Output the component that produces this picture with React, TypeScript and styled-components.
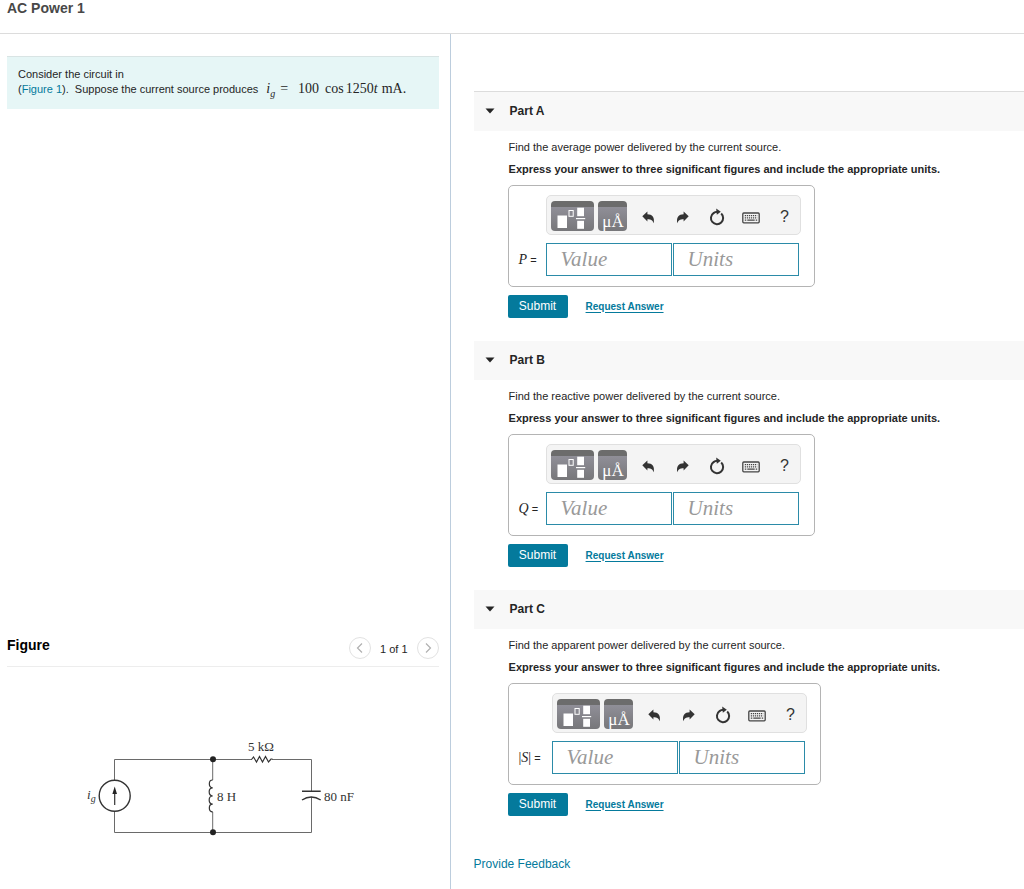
import React from "react";
import styled, { createGlobalStyle } from "styled-components";

const teal = "#047a9c";
const serif = '"Liberation Serif", "Times New Roman", serif';

const GlobalStyle = createGlobalStyle`
  *, *::before, *::after { box-sizing: border-box; }
  body {
    margin: 0;
    background: #fff;
    color: #252525;
    font: 11px/14px "Liberation Sans", Arial, sans-serif;
  }
  button, input { font: inherit; color: inherit; }
  h1, h2, p { margin: 0; }
`;

const Page = styled.div`
  display: flex;
  flex-direction: column;
  min-height: 100vh;
`;

const TitleBar = styled.header`
  height: 34px;
  padding: 0 7px;
  border-bottom: 1px solid #dcdcdc;
`;

const Title = styled.h1`
  color: #484848;
  font-size: 14px;
  line-height: 16px;
`;

const Columns = styled.div`
  flex: 1;
  display: grid;
  grid-template-columns: 44% minmax(0, 1fr);
`;

const LeftColumn = styled.div`
  display: flex;
  flex-direction: column;
  justify-content: space-between;
  padding: 22px 11px 0 7px;
  border-right: 1px solid #bccddd;
`;

const Problem = styled.section`
  padding: 10px 11px 12px;
  border-top: 1px solid #d9e4e4;
  background: #e6f6f6;
`;

const TextLink = styled.a`
  color: ${teal};
  text-decoration: none;
`;

const Formula = styled.span`
  margin-left: 8px;
  font: 14px/16px ${serif};

  sub {
    font-size: 10px;
    line-height: 0;
  }
`;

const Term = styled.span<{ $gap: number }>`
  margin-left: ${(p) => p.$gap}px;
`;

const FigureHeader = styled.div`
  display: flex;
  align-items: flex-start;
  justify-content: space-between;
  height: 32px;
  padding-top: 2px;
  border-bottom: 1px solid #ededed;
`;

const FigureTitle = styled.h2`
  color: #000;
  font-size: 14px;
  line-height: 16px;
`;

const Pager = styled.div`
  display: flex;
  align-items: center;
  gap: 9px;
`;

const PagerButton = styled.button`
  display: grid;
  place-items: center;
  width: 22px;
  height: 22px;
  padding: 0;
  border: 1px solid #e2e2e2;
  border-radius: 50%;
  background: #fff;
`;

const PageCount = styled.span`
  padding-top: 2px;
`;

const Circuit = styled.svg`
  display: block;
  margin: 63px 0 39px 73px;
  font: 13px ${serif};
`;

const RightColumn = styled.main`
  padding: 57px 0 16px 23px;
`;

const Parts = styled.div`
  border-top: 1px solid #dcdcdc;
`;

const PartSection = styled.section`
  padding-bottom: 23px;
`;

const PartHeading = styled.h2`
  font-size: 12px;
  line-height: 16px;
`;

const PartToggle = styled.button`
  display: flex;
  align-items: center;
  gap: 15px;
  width: 100%;
  height: 39px;
  padding: 0 11px 2px;
  border: 0;
  background: #f8f8f8;
  font-weight: bold;
`;

const PartBody = styled.div`
  padding: 9px 0 0 34px;
`;

const Prompt = styled.p<{ $strong?: boolean }>`
  margin-bottom: 8px;
  padding-left: 1px;
  font-weight: ${(p) => (p.$strong ? "bold" : "normal")};
`;

const AnswerBox = styled.div`
  display: inline-grid;
  grid-template-columns: auto auto;
  row-gap: 8px;
  align-items: center;
  vertical-align: top;
  margin-top: 1px;
  padding: 9px 13px 10px 9px;
  border: 1px solid #b4b4b4;
  border-radius: 5px;
`;

const Toolbar = styled.div`
  grid-column: 2;
  display: flex;
  align-items: center;
  gap: 10px;
  width: 255px;
  height: 40px;
  padding: 2px 0 0 4px;
  border: 1px solid #e0e0e0;
  border-radius: 5px;
  background: #f4f4f4;
`;

const PaletteGroup = styled.div`
  display: flex;
  gap: 4px;
`;

const PaletteButton = styled.button<{ $width: number }>`
  display: grid;
  place-items: center;
  width: ${(p) => p.$width}px;
  height: 30px;
  padding: 0;
  border: 0;
  border-radius: 4px;
  background: linear-gradient(#6c6c6c 6px, #908f98 6px, #77777a);
  color: #fff;
  overflow: hidden;
`;

const UnitGlyphs = styled.span`
  padding: 12px 0 0 2px;
  font: 17px/18px ${serif};
`;

const ToolButton = styled.button`
  display: grid;
  place-items: center;
  width: 24px;
  height: 30px;
  padding: 2px 0 0;
  border: 0;
  background: none;
  color: #333;
  font-size: 16px;
`;

const VariableLabel = styled.label<{ $width: number }>`
  width: ${(p) => p.$width}px;
  padding-left: 1px;
  white-space: nowrap;
`;

const Variable = styled.span`
  font: italic 14px/16px ${serif};
`;

const Bar = styled.span`
  font: 14px/16px ${serif};
`;

const Fields = styled.div`
  display: flex;
  gap: 1px;
`;

const Field = styled.input`
  width: 126px;
  height: 33px;
  padding: 0 14px;
  border: 1px solid #2b8ba8;
  border-radius: 0;
  background: #fff;
  font: italic 21px/24px ${serif};

  &::placeholder {
    color: #999;
    opacity: 1;
  }
`;

const Actions = styled.div`
  display: flex;
  align-items: center;
  gap: 18px;
  margin-top: 8px;
`;

const SubmitButton = styled.button`
  width: 60px;
  height: 23px;
  padding: 0 0 1px;
  border: 0;
  border-radius: 2px;
  background: ${teal};
  color: #fff;
  font-size: 12px;
`;

const RequestLink = styled.a`
  color: ${teal};
  font-size: 10px;
  font-weight: bold;
  text-underline-offset: 2px;
`;

const FeedbackLink = styled(TextLink)`
  display: inline-block;
  margin-top: 17px;
  font-size: 12px;
  line-height: 16px;
`;

const Chevron = ({ d }: { d: string }) => (
  <svg width="8" height="12" viewBox="0 0 8 12" fill="none" stroke="#b0b0b0" strokeWidth="1.2" aria-hidden="true">
    <path d={d} />
  </svg>
);

const TemplateIcon = () => (
  <svg width="43" height="30" viewBox="0 0 43 30" fill="#fff" aria-hidden="true">
    <rect x="6.5" y="14.5" width="9.5" height="12.5" />
    <rect x="18" y="9.5" width="4.2" height="5.8" fill="none" stroke="#fff" />
    <rect x="26.2" y="6.7" width="6.8" height="8.5" />
    <rect x="25" y="17" width="9.2" height="1.2" />
    <rect x="26.2" y="19.8" width="6.8" height="8" />
  </svg>
);

const UndoIcon = () => (
  <svg width="13" height="13" viewBox="0 0 13 13" fill="#333" aria-hidden="true">
    <path d="M.3 5.2 5.4 .4v2.8c4.8 0 7.5 3 6.3 9.1-.9-2.700-2.400-4.100-6.300-4.100V10.500z" />
  </svg>
);

const RedoIcon = () => (
  <svg width="13" height="13" viewBox="0 0 13 13" fill="#333" aria-hidden="true">
    <path d="M12.7 5.2 7.6 .4v2.8c-4.8 0-7.5 3-6.3 9.1 .9-2.7 2.4-4.1 6.3-4.1V10.5z" />
  </svg>
);

const ResetIcon = () => (
  <svg width="16" height="18" viewBox="0 0 16 18" fill="none" aria-hidden="true">
    <path d="M12.2 5.6A6.1 6.1 0 1 1 4.5 5.1Q6 3.9 8.5 3.8" stroke="#333" strokeWidth="2" />
    <path d="M7.2 .5 11.8 3.7 7.8 6.8z" fill="#333" />
  </svg>
);

const KeyboardIcon = () => (
  <svg width="18" height="14" viewBox="0 0 18 14" fill="none" stroke="#444" aria-hidden="true">
    <rect x=".8" y="3" width="16.4" height="9.8" rx="1" strokeWidth="1.3" />
    <path d="M2.8 5.7h12.4M2.8 7.9h12.4" strokeDasharray="1.2 .8" strokeWidth="1.2" />
    <path d="M2.8 10.2h1.5M5.3 10.2h7.4M13.7 10.2h1.5" strokeWidth="1.2" />
  </svg>
);

const CircuitDiagram = () => (
  <Circuit width="300" height="120" viewBox="0 0 300 120" role="img" aria-label="Circuit with current source, inductor, resistor and capacitor">
    <g fill="none" stroke="#6a6a6a" strokeWidth="1">
      <path d="M34.5 50V29.5H172M192 29.5h39.5V61M231.5 67v35.5h-197V81" />
      <path d="M132.7 29v21M132.7 82v20" />
    </g>
    <g fill="none" stroke="#333" strokeWidth="1.2">
      <circle cx="34.7" cy="65.7" r="15.5" strokeWidth="1.4" />
      <path d="M34.7 75V60" />
      <path d="M171.5 29.5l2-2.5 3 5 3-5.5 3 5.5 3-5.5 3 5.5 2.5-3h1.5" />
      <path d="M132.7 50c-4.5 0-4.5 7.5 0 7.8-4.7 0-4.7 8 0 8.2-4.7 0-4.7 8 0 8.2-4.5 0-4.5 7.5 0 7.6" />
      <path d="M222 61.3h18.7M222 70q9.3-6 18.7 0" strokeWidth="1.4" />
    </g>
    <g fill="#222">
      <path d="M34.7 56.5l2.3 7.5h-4.6z" />
      <circle cx="133" cy="29.3" r="3" />
      <circle cx="133" cy="102.2" r="3" />
    </g>
    <g fill="#333">
      <text x="168" y="21">5 kΩ</text>
      <text x="137" y="71">8 H</text>
      <text x="244" y="71">80 nF</text>
      <text x="7" y="69" fontStyle="italic">i<tspan dy="3" fontSize="10">g</tspan></text>
    </g>
  </Circuit>
);

type Part = {
  id: string;
  quantity: string;
  variable: string;
  magnitude?: boolean;
};

const parts: Part[] = [
  { id: "A", quantity: "average", variable: "P" },
  { id: "B", quantity: "reactive", variable: "Q" },
  { id: "C", quantity: "apparent", variable: "S", magnitude: true },
];

const AnswerToolbar = () => (
  <Toolbar role="toolbar" aria-label="Answer tools">
    <PaletteGroup>
      <PaletteButton $width={43} aria-label="Templates"><TemplateIcon /></PaletteButton>
      <PaletteButton $width={29} aria-label="Units"><UnitGlyphs>μÅ</UnitGlyphs></PaletteButton>
    </PaletteGroup>
    <ToolButton aria-label="Undo"><UndoIcon /></ToolButton>
    <ToolButton aria-label="Redo"><RedoIcon /></ToolButton>
    <ToolButton aria-label="Reset"><ResetIcon /></ToolButton>
    <ToolButton aria-label="Keyboard shortcuts"><KeyboardIcon /></ToolButton>
    <ToolButton aria-label="Help">?</ToolButton>
  </Toolbar>
);

const PartPanel = ({ id, quantity, variable, magnitude }: Part) => (
  <PartSection>
    <PartHeading>
      <PartToggle aria-expanded="true">
        <svg width="10" height="6" viewBox="0 0 10 6" aria-hidden="true">
          <path d="M.5 .5h9L5 5.5z" fill="#252525" />
        </svg>
        Part {id}
      </PartToggle>
    </PartHeading>
    <PartBody>
      <Prompt>Find the {quantity} power delivered by the current source.</Prompt>
      <Prompt $strong>Express your answer to three significant figures and include the appropriate units.</Prompt>
      <AnswerBox>
        <AnswerToolbar />
        <VariableLabel htmlFor={`value-${id}`} $width={magnitude ? 34 : 28}>
          {magnitude && <Bar>|</Bar>}
          <Variable>{variable}</Variable>
          {magnitude && <Bar>|</Bar>} =
        </VariableLabel>
        <Fields>
          <Field id={`value-${id}`} placeholder="Value" />
          <Field aria-label={`Part ${id} units`} placeholder="Units" />
        </Fields>
      </AnswerBox>
      <Actions>
        <SubmitButton>Submit</SubmitButton>
        <RequestLink href="#request">Request Answer</RequestLink>
      </Actions>
    </PartBody>
  </PartSection>
);

export default function App() {
  return (
    <Page>
      <GlobalStyle />
      <TitleBar>
        <Title>AC Power 1</Title>
      </TitleBar>
      <Columns>
        <LeftColumn>
          <Problem>
            <p>Consider the circuit in</p>
            <p>
              (<TextLink href="#figure">Figure 1</TextLink>).&nbsp; Suppose the current source produces
              <Formula>
                <i>i</i><sub><i>g</i></sub>
                <Term $gap={5}>=</Term>
                <Term $gap={10}>100</Term>
                <Term $gap={6}>cos</Term>
                <Term $gap={2}>1250<i>t</i></Term>
                <Term $gap={4}>mA.</Term>
              </Formula>
            </p>
          </Problem>
          <section id="figure">
            <FigureHeader>
              <FigureTitle>Figure</FigureTitle>
              <Pager>
                <PagerButton aria-label="Previous figure"><Chevron d="M6 1.5 1.5 6 6 10.5" /></PagerButton>
                <PageCount>1 of 1</PageCount>
                <PagerButton aria-label="Next figure"><Chevron d="M2 1.5 6.5 6 2 10.5" /></PagerButton>
              </Pager>
            </FigureHeader>
            <CircuitDiagram />
          </section>
        </LeftColumn>
        <RightColumn>
          <Parts>
            {parts.map((part) => (
              <PartPanel key={part.id} {...part} />
            ))}
          </Parts>
          <FeedbackLink href="#feedback">Provide Feedback</FeedbackLink>
        </RightColumn>
      </Columns>
    </Page>
  );
}
